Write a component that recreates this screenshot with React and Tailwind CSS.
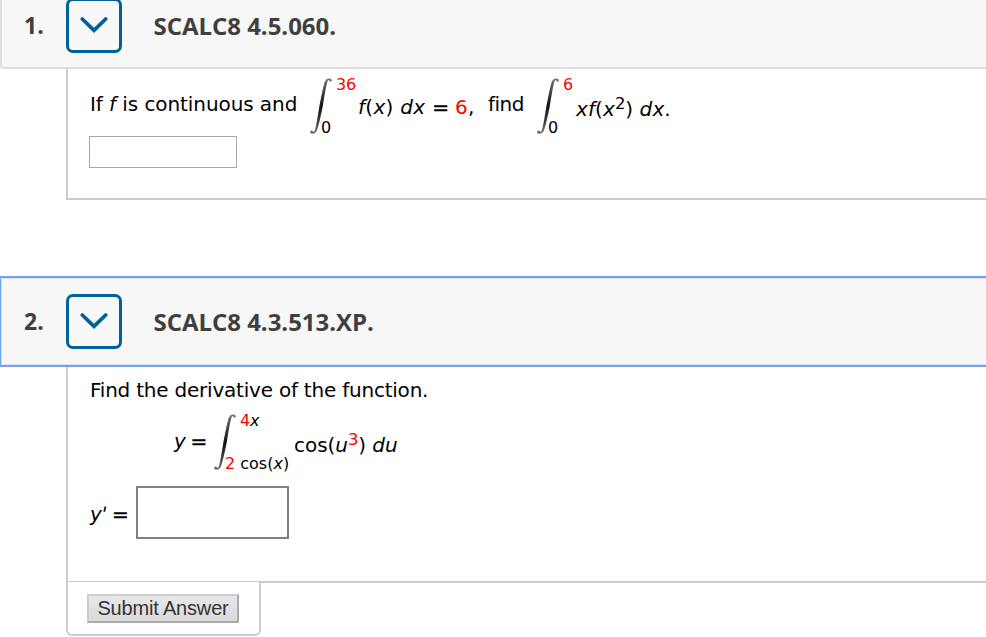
import React from "react";

function Chevron() {
  return (
    <svg className="h-4 w-7" viewBox="0 0 28 16" fill="none">
      <path d="M2.3 2 L14 13.4 L25.7 2" stroke="#00629b" strokeWidth="3.7" strokeLinecap="round" />
    </svg>
  );
}

function ToggleButton({ className = "" }) {
  return (
    <button
      type="button"
      className={
        "flex h-[55px] w-14 shrink-0 items-center justify-center rounded-[7px] border-[3px] border-[#00629b] bg-white/20 pb-px " +
        className
      }
    >
      <Chevron />
    </button>
  );
}

function Integral({ className = "", upper, lower }) {
  return (
    <div className={"flex shrink-0 whitespace-nowrap text-base leading-5 " + className}>
      <svg className="h-14 w-[22px] shrink-0" viewBox="0 0 22 56">
        <defs>
          <linearGradient id="stem" x1="0" y1="0" x2="0" y2="1">
            <stop offset="0" stopColor="#777" />
            <stop offset="0.25" stopColor="#444" />
            <stop offset="0.5" stopColor="#111" />
            <stop offset="0.8" stopColor="#444" />
            <stop offset="1" stopColor="#777" />
          </linearGradient>
        </defs>
        <path
          d="M21.6 1.4 C19.5 -0.2 16.3 -0.2 14.6 4.2 C12.8 10 11.2 19 9.6 27 C8 36 6.6 47 4.8 52.4 C4.2 54.2 3 54 2 52.6 L0.2 53 L0.4 55.3 C3.2 56.6 5.8 55.8 7.2 51.8 C9.4 45 11.2 36 12.8 28 C14.4 19 15.8 9 17.4 3.8 C18.2 1.6 19.4 2 20 3.8 L21.8 3.6 Z"
          fill="url(#stem)"
        />
      </svg>
      <div className="-ml-3 flex h-14 flex-col justify-between">
        <div className="-mt-[3px] pl-4 tracking-[-0.3px]">{upper}</div>
        <div className="-mb-1 pl-px">{lower}</div>
      </div>
    </div>
  );
}

const Red = ({ children }) => <span className="text-[#ff0000]">{children}</span>;

const Equals = () => <span className="tracking-[-0.6px] [-webkit-text-stroke:0.5px_#000]">=</span>;

const Power = ({ children }) => (
  <span className="relative -top-[7px] text-[16.5px] leading-none tracking-[-0.2px]">{children}</span>
);

export default function App() {
  return (
    <main className="h-[637px] w-[986px] overflow-hidden bg-white font-['DejaVu_Sans',sans-serif] text-xl leading-6 text-black">
      <header className="flex h-[69px] items-start rounded-bl-[4px] border-b-2 border-l-2 border-[#dedede] bg-[#f7f7f7] font-['Open_Sans',sans-serif] font-bold text-[#3f3f3f]">
        <span className="mt-[9px] w-16 shrink-0 pl-[22px] text-[23px] leading-8">1.</span>
        <ToggleButton className="-mt-[2px]" />
        <h2 className="mt-[10px] ml-[31.5px] text-[24px] leading-8 tracking-[-0.03px]">SCALC8 4.5.060.</h2>
      </header>

      <section className="ml-[66px] h-[131px] border-b-2 border-l-2 border-[#ccc] pl-[21px]">
        <div className="flex h-[67px] items-start whitespace-nowrap">
          <p className="mt-[23px] ml-px w-[220px] shrink-0 tracking-[-0.08px]">
            If <i>f</i> is continuous and
          </p>
          <Integral className="mt-[9px] w-12" upper={<Red>36</Red>} lower="0" />
          <p className="mt-[26px] w-[130px] shrink-0 tracking-[0.3px]">
            <i>f</i>(<i>x</i>) <i>dx</i> <Equals /> <Red>6</Red>,
          </p>
          <p className="mt-[23px] w-[49px] shrink-0 tracking-[-0.5px]">find</p>
          <Integral className="mt-[9px] w-[39px]" upper={<Red>6</Red>} lower="0" />
          <p className="mt-[28px] tracking-[0.1px]">
            <i>xf</i>(<i>x</i><Power>2</Power>) <i>dx</i>.
          </p>
        </div>
        <input aria-label="Answer 1" className="block h-8 w-[148px] border border-[#a9a9a9] bg-white" />
      </section>

      <header className="mt-[76px] h-[91px] border-y-2 border-l border-[#6ea3f7] bg-[#f7f7f7] font-['Open_Sans',sans-serif] font-bold text-[#3f3f3f]">
        <div className="flex h-full items-start border-y border-l border-[#dedede]">
          <span className="mt-[26px] w-16 shrink-0 pl-[22px] text-[23px] leading-8">2.</span>
          <ToggleButton className="mt-[15px]" />
          <h2 className="mt-[27px] ml-[31.5px] text-[24px] leading-8 tracking-[-0.03px]">SCALC8 4.3.513.XP.</h2>
        </div>
      </header>

      <div className="ml-[66px]">
        <section className="h-[214px] border-l-2 border-[#ccc] pl-[21px]">
          <p className="ml-px pt-[11px] tracking-[-0.22px]">Find the derivative of the function.</p>
          <div className="mt-[12px] flex h-[72px] items-start whitespace-nowrap">
            <p className="mt-[15px] ml-[85px] w-10 shrink-0 tracking-[-0.8px]">
              <i>y</i> <Equals />
            </p>
            <Integral
              className="mt-0 w-20"
              upper={<><Red>4</Red><i>x</i></>}
              lower={<><Red>2</Red> cos(<i>x</i>)</>}
            />
            <p className="mt-[19px] tracking-[-0.04px]">
              cos(<i>u</i><Red><Power>3</Power></Red>) <i>du</i>
            </p>
          </div>
          <div className="flex items-start">
            <p className="mt-[16px] ml-px w-[46px] shrink-0 tracking-[-0.6px] whitespace-nowrap">
              <i>y<span className="inline-block -skew-x-12">'</span></i> <Equals />
            </p>
            <input aria-label="Answer 2" className="h-[53px] w-[153px] border-2 border-[#808080] bg-white" />
          </div>
        </section>
        <footer className="flex items-start">
          <div className="h-[55px] w-[195px] rounded-b-[6px] border-x-2 border-b-2 border-[#ccc]">
            <div className="border-t border-[#ccc] pt-3 pl-[19px]">
              <button
                type="button"
                className="flex h-[29px] w-[152px] items-center justify-center border-2 border-t-[#cdcdcd] border-r-[#aaa] border-b-[#aaa] border-l-[#cdcdcd] bg-linear-to-b from-[#e8e8e8] to-[#dadada] pb-0.5 font-['Liberation_Sans',sans-serif] text-xl leading-6 tracking-[-0.17px] whitespace-nowrap text-[#333]"
              >
                Submit Answer
              </button>
            </div>
          </div>
          <div className="h-0.5 flex-1 bg-[#ccc]" />
        </footer>
      </div>
    </main>
  );
}
